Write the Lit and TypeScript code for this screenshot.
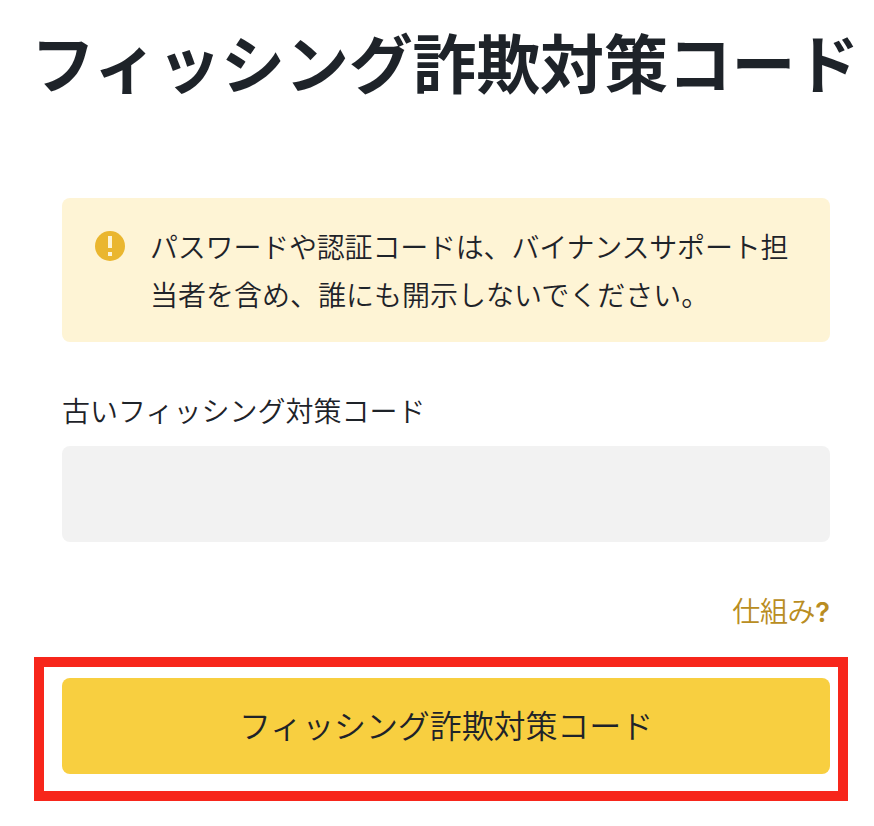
import { LitElement, html, css } from "lit";
import { customElement } from "lit/decorators.js";

@customElement("app-root")
export class AppRoot extends LitElement {
  static styles = css`
    :host {
      display: block;
      height: 826px;
      overflow: hidden;
      background: #fff;
      color: #1e2329;
      font-family: Inter, "Noto Sans CJK JP", sans-serif;
      font-weight: 350;
    }
    * { box-sizing: border-box; }
    .page { display: flex; flex-direction: column; white-space: nowrap; }
    h1 {
      margin: 17px 0 0 31px;
      height: 96px;
      font-size: 64px;
      line-height: 96px;
      font-weight: 700;
      letter-spacing: -0.2px;
    }
    .form { margin: 85px 44px 0 62px; display: flex; flex-direction: column; }
    .notice {
      height: 144px;
      border-radius: 8px;
      background: #fef4d5;
      padding: 26px 0 0 33px;
      display: flex;
      gap: 25px;
    }
    .notice svg { width: 30px; height: 30px; margin-top: 7px; flex: none; }
    .notice p { margin: 0; font-size: 28px; line-height: 48px; }
    .tight { letter-spacing: -0.2px; }
    .label { margin-top: 48px; height: 44px; font-size: 28px; line-height: 44px; }
    .input { margin-top: 12px; height: 96px; border-radius: 8px; background: #f2f2f2; }
    .help {
      margin-top: 48px;
      height: 44px;
      line-height: 44px;
      font-size: 28px;
      letter-spacing: -0.3px;
      color: #b98d22;
      text-align: right;
    }
    .help b { font-size: 27px; font-weight: 600; letter-spacing: 0; }
    .highlight {
      margin: 23px 26px 0 34px;
      height: 144px;
      border: 10px solid #f7261b;
      padding: 11px 8px 0 18px;
    }
    button {
      display: block;
      width: 100%;
      height: 96px;
      padding: 2px 0 0;
      border: 0;
      border-radius: 8px;
      background: #f8cf40;
      color: #1e2329;
      font: 350 32px/94px Inter, "Noto Sans CJK JP", sans-serif;
      letter-spacing: -0.1px;
    }
  `;

  render() {
    return html`
      <main class="page">
        <h1>フィッシング詐欺対策コード</h1>
        <section class="form">
          <div class="notice">
            <svg viewBox="0 0 30 30">
              <circle cx="15" cy="15" r="15" fill="#eab62f" />
              <path d="M13 5h4v12h-4zM13 21h4v4h-4z" fill="#fef4d5" />
            </svg>
            <p><span class="tight">パスワードや認証コードは、バイナンスサポート担</span><br />当者を含め、誰にも開示しないでください。</p>
          </div>
          <div class="label">古いフィッシング対策コード</div>
          <div class="input"></div>
          <div class="help">仕組み<b>?</b></div>
        </section>
        <div class="highlight"><button>フィッシング詐欺対策コード</button></div>
      </main>
    `;
  }
}
